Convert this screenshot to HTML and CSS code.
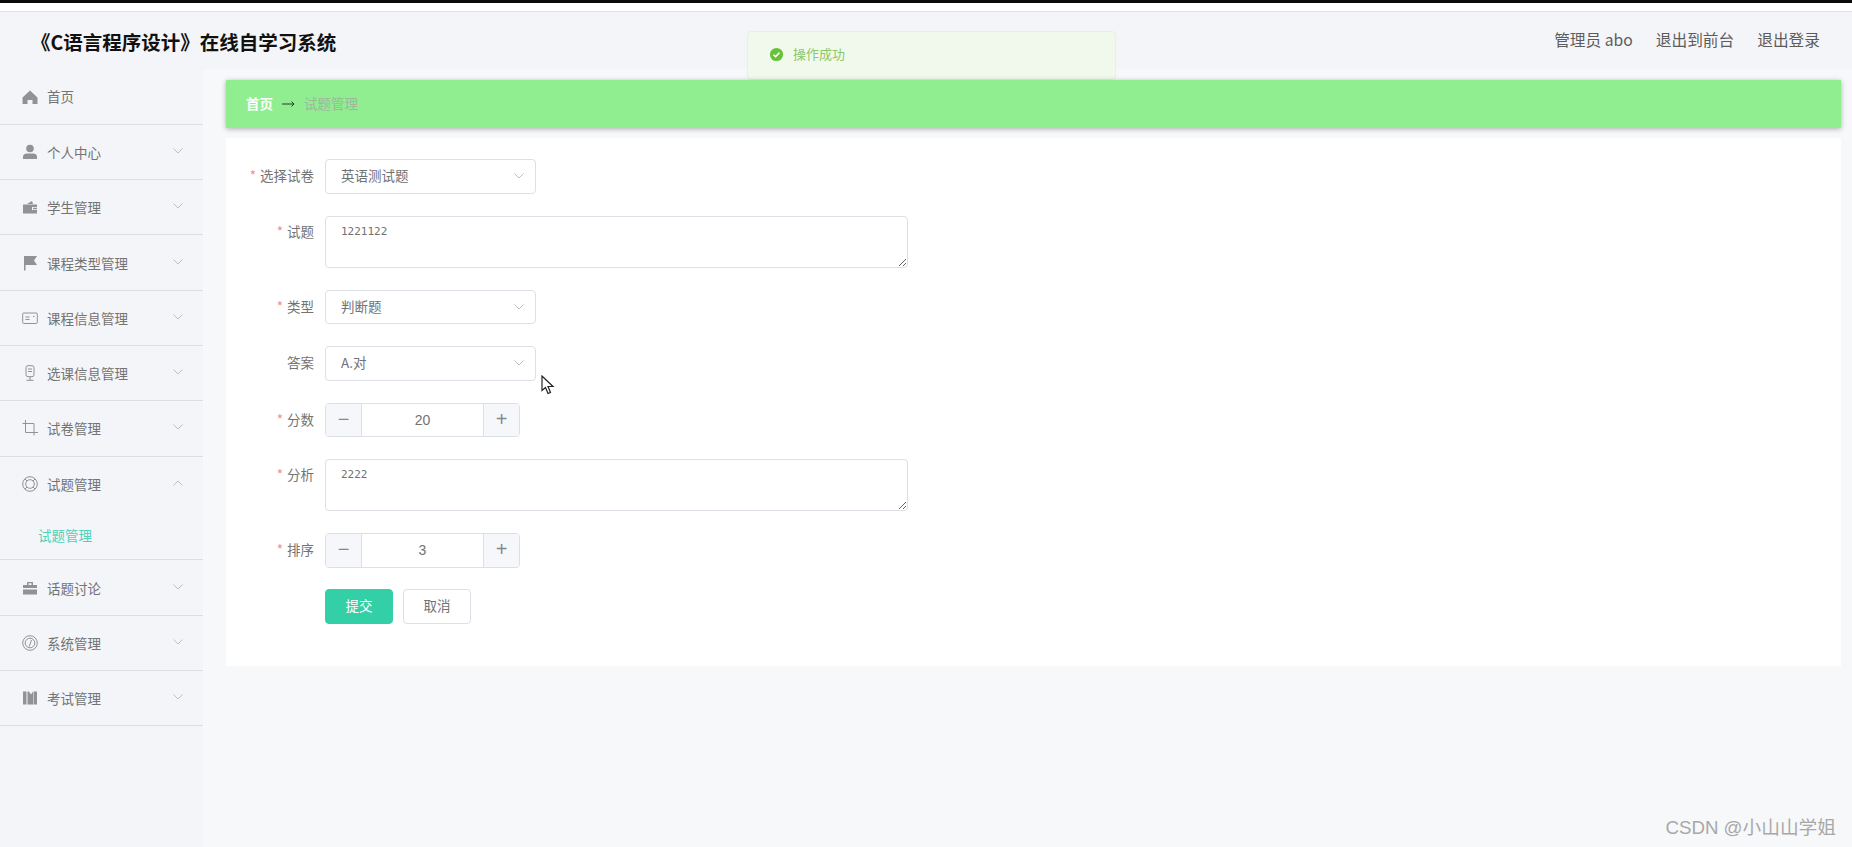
FILE: index.html
```html
<!DOCTYPE html>
<html lang="zh-CN">
<head>
<meta charset="utf-8">
<title>《C语言程序设计》在线自学习系统</title>
<link rel="stylesheet" href="styles.css">
</head>
<body>
<div class="top-black"></div>
<div class="top-white"></div>
<header class="header">
  <h1 class="title">《C语言程序设计》在线自学习系统</h1>
  <div class="user-links">
    <span>管理员 abo</span>
    <span>退出到前台</span>
    <span>退出登录</span>
  </div>
</header>
<div class="toast">
  <svg class="toast-icon" viewBox="0 0 16 16"><circle cx="8" cy="8" r="7" fill="#67c23a"/><path d="M4.8 8.2l2.2 2.1 4.2-4.3" fill="none" stroke="#fff" stroke-width="1.6"/></svg>
  <span>操作成功</span>
</div>
<div class="main">
  <nav class="sidebar">
    <ul class="menu">
      <li class="menu-item home"><svg class="icon" viewBox="0 0 16 16"><path d="M8 1.500L15.500 8.500V15h-5v-4h-5v4h-5V8.500z"/></svg><span>首页</span></li>
      <li class="menu-item"><svg class="icon" viewBox="0 0 16 16"><circle cx="8" cy="4.500" r="3.800"/><path d="M1 15v-2.500C1 10.500 3 9.500 5 9.500h6c2 0 4 1 4 3V15z"/></svg><span>个人中心</span><svg class="chev" viewBox="0 0 10 6"><path d="M.5.500L5 5l4.500-4.500"/></svg></li>
      <li class="menu-item"><svg class="icon" viewBox="0 0 16 16"><path d="M1 5.500h14V8h-5v3h5v3.500H1zM5 5l5-3 1 3zM11 8.800h4v1.400h-4z"/></svg><span>学生管理</span><svg class="chev" viewBox="0 0 10 6"><path d="M.5.500L5 5l4.500-4.500"/></svg></li>
      <li class="menu-item"><svg class="icon" viewBox="0 0 16 16"><path d="M2 1h13l-3 4.500 3 4.500H3.500v5.500H2z"/></svg><span>课程类型管理</span><svg class="chev" viewBox="0 0 10 6"><path d="M.5.500L5 5l4.500-4.500"/></svg></li>
      <li class="menu-item"><svg class="icon line" viewBox="0 0 16 16"><rect x=".7" y="3" width="14.600" height="10.500" rx="1"/><path d="M3.500 7h4M3.500 9.500h4M11 6.500h1.500"/></svg><span>课程信息管理</span><svg class="chev" viewBox="0 0 10 6"><path d="M.5.500L5 5l4.500-4.500"/></svg></li>
      <li class="menu-item"><svg class="icon line" viewBox="0 0 16 16"><rect x="4" y=".7" width="8" height="11" rx="2"/><path d="M8 11.700V15.300M4.500 15.300h7M6 4h4M6 6.500h4"/></svg><span>选课信息管理</span><svg class="chev" viewBox="0 0 10 6"><path d="M.5.500L5 5l4.500-4.500"/></svg></li>
      <li class="menu-item"><svg class="icon line" viewBox="0 0 16 16"><path d="M3.500 0v12.500H16M.5 3.500h11.500V15.500"/></svg><span>试卷管理</span><svg class="chev" viewBox="0 0 10 6"><path d="M.5.500L5 5l4.500-4.500"/></svg></li>
      <li class="menu-item open"><svg class="icon line" viewBox="0 0 16 16"><circle cx="8" cy="8" r="7.300"/><circle cx="8" cy="8" r="4.300"/><path d="M3 3l2 2M13 3l-2 2M3 13l2-2M13 13l-2-2"/></svg><span>试题管理</span><svg class="chev" viewBox="0 0 10 6"><path d="M.5 5.500L5 1l4.500 4.500"/></svg></li>
      <li class="sub-item">试题管理</li>
      <li class="menu-item"><svg class="icon" viewBox="0 0 16 16"><path d="M1 8h14v-3H11V2H5v3H1zM6.500 3.300h3V5h-3zM1 9.500h14V14.500H1z"/></svg><span>话题讨论</span><svg class="chev" viewBox="0 0 10 6"><path d="M.5.500L5 5l4.500-4.500"/></svg></li>
      <li class="menu-item"><svg class="icon line" viewBox="0 0 16 16"><circle cx="8" cy="8" r="7.300"/><circle cx="8" cy="8" r="4.800"/><path d="M7.200 11.500L9.500 5"/></svg><span>系统管理</span><svg class="chev" viewBox="0 0 10 6"><path d="M.5.500L5 5l4.500-4.500"/></svg></li>
      <li class="menu-item"><svg class="icon" viewBox="0 0 16 16"><path d="M1 1.500h3.500v13H1zM5.500 1.500h1.500l2 3 2-3h.5v13H5.500zM12 1.500h3v13h-3z"/></svg><span>考试管理</span><svg class="chev" viewBox="0 0 10 6"><path d="M.5.500L5 5l4.500-4.500"/></svg></li>
    </ul>
  </nav>
  <main class="content">
    <div class="crumbs">
      <span class="crumb-home">首页</span>
      <svg class="crumb-arrow" viewBox="0 0 13 8"><path d="M0 4h12M9.500 1.500L12 4 9.500 6.500"/></svg>
      <span class="crumb-current">试题管理</span>
    </div>
    <form class="panel">
      <div class="row">
        <label class="label"><i>*</i>选择试卷</label>
        <div class="select"><span>英语测试题</span><svg class="chev" viewBox="0 0 10 6"><path d="M.5.500L5 5l4.500-4.500"/></svg></div>
      </div>
      <div class="row">
        <label class="label top"><i>*</i>试题</label>
        <textarea class="area" readonly>1221122</textarea>
      </div>
      <div class="row">
        <label class="label"><i>*</i>类型</label>
        <div class="select"><span>判断题</span><svg class="chev" viewBox="0 0 10 6"><path d="M.5.500L5 5l4.500-4.500"/></svg></div>
      </div>
      <div class="row">
        <label class="label">答案</label>
        <div class="select"><span>A.对</span><svg class="chev" viewBox="0 0 10 6"><path d="M.5.500L5 5l4.500-4.500"/></svg></div>
      </div>
      <div class="row">
        <label class="label"><i>*</i>分数</label>
        <div class="stepper"><span class="step minus">−</span><span class="num">20</span><span class="step plus">+</span></div>
      </div>
      <div class="row">
        <label class="label top"><i>*</i>分析</label>
        <textarea class="area" readonly>2222</textarea>
      </div>
      <div class="row">
        <label class="label"><i>*</i>排序</label>
        <div class="stepper"><span class="step minus">−</span><span class="num">3</span><span class="step plus">+</span></div>
      </div>
      <div class="row actions">
        <button type="button" class="btn primary">提交</button>
        <button type="button" class="btn">取消</button>
      </div>
    </form>
  </main>
</div>
<svg class="cursor" viewBox="0 0 14 20"><path d="M1 1v14.500l3.500-3 2.500 6 2.500-1-2.500-6H12z" fill="#fff" stroke="#222" stroke-width="1.200"/></svg>
<div class="watermark">CSDN @小山山学姐</div>
</body>
</html>
```
FILE: styles.css
```css
* { box-sizing: border-box; }
html, body { height: 100%; }
body {
  margin: 0;
  height: 847px;
  overflow: hidden;
  display: flex;
  flex-direction: column;
  position: relative;
  background: #f7f8fa;
  font-family: "Noto Sans CJK SC", "Liberation Sans", sans-serif;
  font-size: 13.5px;
  color: #707276;
}
.top-black { height: 3px; background: #0a0a0a; flex: none; }
.top-white { height: 9px; background: #fff; border-bottom: 1px solid #e2e3ea; flex: none; }
.header {
  height: 58px;
  flex: none;
  display: flex;
  align-items: flex-start;
  justify-content: space-between;
  padding: 16px 32px 0 31px;
  background: #f4f5f9;
}
.title {
  margin: 0;
  font-size: 19.5px;
  line-height: 28px;
  font-weight: 700;
  color: #111;
}
.user-links {
  display: flex;
  gap: 23px;
  font-size: 15.7px;
  line-height: 24px;
  color: #5c5c5c;
}
.toast {
  position: absolute;
  left: 747px;
  top: 31px;
  width: 369px;
  height: 49px;
  display: flex;
  align-items: flex-start;
  gap: 9px;
  padding: 12px 0 0 21px;
  background: #f0f9eb;
  border: 1px solid #e5f3dc;
  border-radius: 4px;
  color: #8bc86b;
  font-size: 13px;
  line-height: 20px;
  z-index: 1;
}
.toast-icon { width: 15px; height: 15px; margin-top: 3px; flex: none; }
.main { flex: 1; display: flex; min-height: 0; }
.sidebar { width: 203px; flex: none; background: #f4f5f9; }
.menu { list-style: none; margin: 0; padding: 0; }
.menu-item {
  height: 55.300px;
  display: flex;
  align-items: center;
  padding: 0 20px 0 22px;
  border-bottom: 1.500px solid #dcdee4;
  color: #737373;
  line-height: 20px;
}
.menu-item.home { height: 54.800px; }
.menu-item.open { border-bottom: none; }
.menu-item > span { margin-left: 9px; flex: 1; }
.menu-item.home > span { margin-top: -2px; }
.icon { width: 16px; height: 16px; flex: none; fill: #909296; }
.icon.line { fill: none; stroke: #909296; stroke-width: 1; }
.chev { width: 10px; height: 6px; flex: none; fill: none; stroke: #bcbfc5; stroke-width: 1; margin-top: -2px; }
.sub-item {
  height: 48.500px;
  padding: 13px 0 0 38px;
  line-height: 20px;
  color: #4fd0b8;
  border-bottom: 1.500px solid #dcdee4;
}
.content { flex: 1; min-width: 0; padding: 10px 11px 0 23px; background: #f7f8fa; }
.crumbs {
  height: 48px;
  display: flex;
  align-items: center;
  padding-left: 20px;
  background: #90ee90;
  box-shadow: 0 1px 5px rgba(0, 0, 0, .3);
  position: relative;
  z-index: 2;
}
.crumbs > span { margin-top: -2px; }
.crumb-home { color: #fff; font-weight: 700; }
.crumb-arrow { width: 13px; height: 8px; margin: 0 9px 0 9px; fill: none; stroke: #333; stroke-width: 1; }
.crumb-current { color: #9cb89c; }
.panel {
  margin-top: 10px;
  height: 528px;
  padding-top: 21px;
  background: #fff;
}
.row { display: flex; align-items: flex-start; gap: 11px; margin-bottom: 22px; }
.row.actions { padding-left: 99px; gap: 10px; margin: -1px 0 0; }
.label {
  width: 88px;
  flex: none;
  text-align: right;
  line-height: 32px;
  color: #737373;
}
.label.top { line-height: 31px; }
.label i { font-style: normal; color: #f08a8a; margin-right: 4px; }
.select {
  width: 211px;
  height: 34.500px;
  display: flex;
  align-items: center;
  justify-content: space-between;
  padding: 0 11px 0 15px;
  border: 1px solid #dcdfe6;
  border-radius: 4px;
  background: #fff;
}
.select > span { margin-top: -2px; }
.select .chev { margin-top: 0; }
.area {
  display: block;
  width: 583px;
  height: 52px;
  padding: 7px 15px;
  border: 1px solid #dcdfe6;
  border-radius: 4px;
  font-family: "DejaVu Sans Mono", monospace;
  font-size: 11px;
  line-height: 16px;
  color: #707276;
  resize: vertical;
  outline: none;
}
.stepper {
  width: 195px;
  height: 34.500px;
  display: flex;
  border: 1px solid #dcdfe6;
  border-radius: 4px;
  overflow: hidden;
}
.step {
  width: 36px;
  flex: none;
  text-align: center;
  background: #f5f7fa;
  color: #85888d;
  font-size: 20px;
  line-height: 30px;
  font-family: "Liberation Sans", sans-serif;
}
.step.minus { border-right: 1px solid #dcdfe6; }
.step.plus { border-left: 1px solid #dcdfe6; }
.num { flex: 1; text-align: center; line-height: 32px; font-family: "Liberation Sans", sans-serif; font-size: 14px; }
.btn {
  width: 68px;
  height: 35px;
  padding: 0 0 2px;
  border: 1px solid #dcdfe6;
  border-radius: 4px;
  background: #fff;
  color: #707276;
  font: inherit;
}
.btn.primary { background: #33d0a8; border-color: #33d0a8; color: #fff; }
.cursor { position: absolute; left: 541px; top: 375px; width: 14px; height: 20px; z-index: 5; }
.watermark {
  position: absolute;
  right: 16px;
  top: 815px;
  font-size: 18.700px;
  line-height: 26px;
  color: #a8a8a8;
  font-family: "Liberation Sans", "Noto Sans CJK SC", sans-serif;
}
```
